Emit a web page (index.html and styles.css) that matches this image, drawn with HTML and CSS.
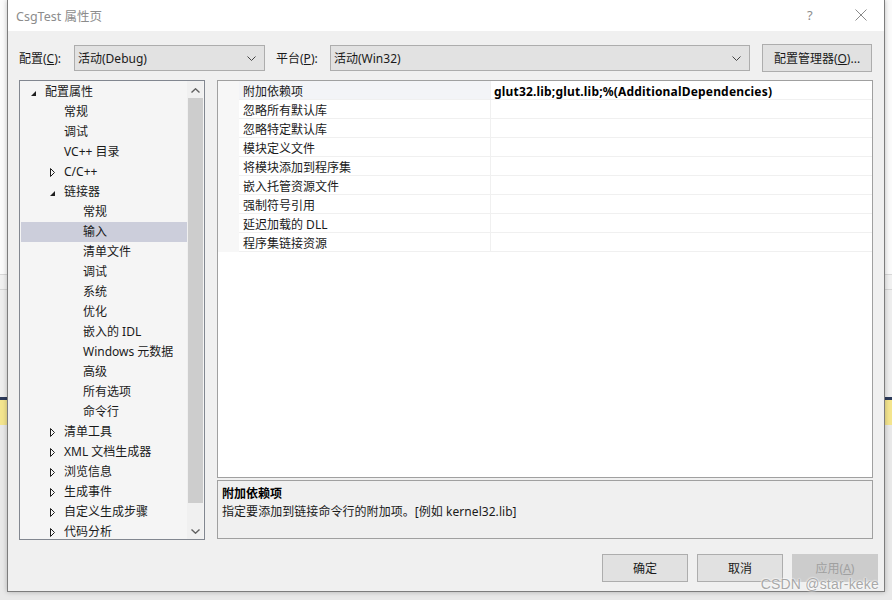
FILE: index.html
```html
<!DOCTYPE html>
<html lang="zh-CN">
<head>
<meta charset="utf-8">
<title>CsgTest 属性页</title>
<link rel="stylesheet" href="styles.css">
</head>
<body>
<div class="dialog">
  <div class="titlebar">
    <span class="title">CsgTest 属性页</span>
    <span class="help">?</span>
    <span class="close"><svg width="12" height="12" viewBox="0 0 12 12"><path d="M0.5 0.5 L11.5 11.5 M11.5 0.5 L0.5 11.5" stroke="#8a8a8a" stroke-width="1" fill="none"/></svg></span>
  </div>
  <div class="content">
    <div class="config-row">
      <span class="label l1">配置(<u>C</u>):</span>
      <div class="combo c1"><span>活动(Debug)</span><svg class="chev" width="9" height="5" viewBox="0 0 9 5"><path d="M0.5 0.5 L4.5 4.5 L8.5 0.5" stroke="#444" fill="none"/></svg></div>
      <span class="label l2">平台(<u>P</u>):</span>
      <div class="combo c2"><span>活动(Win32)</span><svg class="chev" width="9" height="5" viewBox="0 0 9 5"><path d="M0.5 0.5 L4.5 4.5 L8.5 0.5" stroke="#444" fill="none"/></svg></div>
      <button class="btn mgr">配置管理器(<u>O</u>)...</button>
    </div>
    <div class="main">
      <div class="tree">
        <div class="tree-list">
          <div class="node lv0"><span class="arr"><svg width="19" height="20"><path d="M10 9 L10 14 L5 14 Z" fill="#1e1e1e"/></svg></span>配置属性</div>
          <div class="node lv1"><span class="arr"></span>常规</div>
          <div class="node lv1"><span class="arr"></span>调试</div>
          <div class="node lv1"><span class="arr"></span>VC++ 目录</div>
          <div class="node lv1"><span class="arr"><svg width="19" height="20"><path d="M5.5 6.5 L9.5 10.5 L5.5 14.5 Z" fill="none" stroke="#1e1e1e"/></svg></span>C/C++</div>
          <div class="node lv1"><span class="arr"><svg width="19" height="20"><path d="M10 9 L10 14 L5 14 Z" fill="#1e1e1e"/></svg></span>链接器</div>
          <div class="node lv2"><span class="arr"></span>常规</div>
          <div class="node lv2 sel"><span class="arr"></span>输入</div>
          <div class="node lv2"><span class="arr"></span>清单文件</div>
          <div class="node lv2"><span class="arr"></span>调试</div>
          <div class="node lv2"><span class="arr"></span>系统</div>
          <div class="node lv2"><span class="arr"></span>优化</div>
          <div class="node lv2"><span class="arr"></span>嵌入的 IDL</div>
          <div class="node lv2"><span class="arr"></span>Windows 元数据</div>
          <div class="node lv2"><span class="arr"></span>高级</div>
          <div class="node lv2"><span class="arr"></span>所有选项</div>
          <div class="node lv2"><span class="arr"></span>命令行</div>
          <div class="node lv1"><span class="arr"><svg width="19" height="20"><path d="M5.5 6.5 L9.5 10.5 L5.5 14.5 Z" fill="none" stroke="#1e1e1e"/></svg></span>清单工具</div>
          <div class="node lv1"><span class="arr"><svg width="19" height="20"><path d="M5.5 6.5 L9.5 10.5 L5.5 14.5 Z" fill="none" stroke="#1e1e1e"/></svg></span>XML 文档生成器</div>
          <div class="node lv1"><span class="arr"><svg width="19" height="20"><path d="M5.5 6.5 L9.5 10.5 L5.5 14.5 Z" fill="none" stroke="#1e1e1e"/></svg></span>浏览信息</div>
          <div class="node lv1"><span class="arr"><svg width="19" height="20"><path d="M5.5 6.5 L9.5 10.5 L5.5 14.5 Z" fill="none" stroke="#1e1e1e"/></svg></span>生成事件</div>
          <div class="node lv1"><span class="arr"><svg width="19" height="20"><path d="M5.5 6.5 L9.5 10.5 L5.5 14.5 Z" fill="none" stroke="#1e1e1e"/></svg></span>自定义生成步骤</div>
          <div class="node lv1"><span class="arr"><svg width="19" height="20"><path d="M5.5 6.5 L9.5 10.5 L5.5 14.5 Z" fill="none" stroke="#1e1e1e"/></svg></span>代码分析</div>
        </div>
        <div class="vscroll">
          <div class="sarrow"><svg width="9" height="5" viewBox="0 0 9 5"><path d="M0.5 4.5 L4.5 0.8 L8.5 4.5" stroke="#606060" stroke-width="1.4" fill="none"/></svg></div>
          <div class="thumb"></div>
          <div class="sarrow"><svg width="9" height="5" viewBox="0 0 9 5"><path d="M0.5 0.5 L4.5 4.2 L8.5 0.5" stroke="#606060" stroke-width="1.4" fill="none"/></svg></div>
        </div>
      </div>
      <div class="right">
        <div class="grid">
          <div class="prow first"><span class="gut"></span><span class="pname">附加依赖项</span><span class="pval">glut32.lib;glut.lib;%(AdditionalDependencies)</span></div>
          <div class="prow"><span class="gut"></span><span class="pname">忽略所有默认库</span><span class="pval"></span></div>
          <div class="prow"><span class="gut"></span><span class="pname">忽略特定默认库</span><span class="pval"></span></div>
          <div class="prow"><span class="gut"></span><span class="pname">模块定义文件</span><span class="pval"></span></div>
          <div class="prow"><span class="gut"></span><span class="pname">将模块添加到程序集</span><span class="pval"></span></div>
          <div class="prow"><span class="gut"></span><span class="pname">嵌入托管资源文件</span><span class="pval"></span></div>
          <div class="prow"><span class="gut"></span><span class="pname">强制符号引用</span><span class="pval"></span></div>
          <div class="prow"><span class="gut"></span><span class="pname">延迟加载的 DLL</span><span class="pval"></span></div>
          <div class="prow"><span class="gut"></span><span class="pname">程序集链接资源</span><span class="pval"></span></div>
        </div>
        <div class="desc">
          <div class="desc-title">附加依赖项</div>
          <div class="desc-text">指定要添加到链接命令行的附加项。[例如 kernel32.lib]</div>
        </div>
      </div>
    </div>
    <div class="buttons">
      <button class="btn act">确定</button>
      <button class="btn act">取消</button>
      <button class="btn disabled">应用(<u>A</u>)</button>
    </div>
  </div>
  <div class="csdn">CSDN @star-keke</div>
</div>
</body>
</html>
```

FILE: styles.css
```css
* { box-sizing: border-box; }
html, body { margin: 0; padding: 0; }
body {
  width: 892px;
  height: 600px;
  overflow: hidden;
  padding-left: 7px;
  font-family: "Noto Sans", "Noto Sans CJK SC", sans-serif;
  font-size: 12px;
  color: #1a1a1a;
  background:
    linear-gradient(to bottom,
      #fbfbfb 0, #fbfbfb 274px,
      #d8d8d8 274px, #d8d8d8 275px,
      #f1f1f1 275px, #f1f1f1 289px,
      #d6d6d6 289px, #d6d6d6 290px,
      #eeeeee 290px, #eeeeee 397px,
      #2d3b5a 397px, #2d3b5a 400px,
      #f4e58e 400px, #f4e58e 425px,
      #e9e9e9 425px, #e9e9e9 600px);
}
.dialog {
  position: relative;
  width: 878px;
  height: 592px;
  background: #f0f0f0;
  border: 1px solid #7d7d7d;
  border-top: none;
  box-shadow: 0 0 5px rgba(0,0,0,0.25);
  display: flex;
  flex-direction: column;
}
.titlebar {
  height: 31px;
  background: #ffffff;
  display: flex;
  align-items: center;
  padding-left: 8px;
  padding-bottom: 1px;
  flex: none;
}
.title {
  color: #8c8c8c;
  font-size: 12.5px;
  flex: 1;
}
.help {
  color: #8c8c8c;
  font-size: 13px;
  width: 12px;
  margin-right: 36px;
}
.close {
  display: flex;
  margin-right: 17px;
}
.content {
  flex: 1;
  display: flex;
  flex-direction: column;
  padding: 13px 11px 10px 11px;
}
.config-row {
  display: flex;
  align-items: center;
  height: 28px;
}
.label { display: inline-block; color: #1a1a1a; }
.l1 { width: 55px; }
.l2 { width: 54px; margin-left: 11px; }
.combo {
  height: 26px;
  background: #e2e2e2;
  border: 1px solid #adadad;
  display: flex;
  align-items: center;
  justify-content: space-between;
  padding: 0 8px 0 3px;
}
.c1 { width: 191px; }
.c2 { width: 420px; }
.chev { display: block; }
.btn {
  font-family: inherit;
  font-size: 12px;
  color: #1a1a1a;
  background: #e1e1e1;
  border: 1px solid #adadad;
  height: 28px;
  padding: 0;
  margin: 0;
}
.mgr { width: 110px; margin-left: 12px; }
.main {
  display: flex;
  gap: 12px;
  margin-top: 8px;
  height: 460px;
}
.tree {
  width: 186px;
  height: 460px;
  border: 1px solid #828790;
  background: #f5f5f5;
  display: flex;
  overflow: hidden;
}
.tree-list {
  flex: 1;
  padding-left: 1px;
  padding-top: 1px;
  overflow: hidden;
}
.node {
  height: 20px;
  line-height: 20px;
  display: flex;
  white-space: nowrap;
}
.node.sel { background: #cccedb; }
.arr { width: 19px; flex: none; display: flex; }
.lv0 { padding-left: 5px; }
.lv1 { padding-left: 24px; }
.lv2 { padding-left: 43px; }
.vscroll {
  width: 16px;
  flex: none;
  background: #f0f0f0;
  display: flex;
  flex-direction: column;
  align-items: center;
  margin-right: 1px;
}
.sarrow {
  height: 17px;
  display: flex;
  align-items: center;
  justify-content: center;
  padding-top: 1px;
}
.thumb {
  width: 15px;
  flex: 1;
  background: #cdcdcd;
  margin-bottom: 19px;
}
.right {
  width: 656px;
  display: flex;
  flex-direction: column;
  gap: 2px;
}
.grid {
  height: 398px;
  background: #ffffff;
  border: 1px solid #a0a0a0;
  overflow: hidden;
}
.prow {
  display: flex;
  height: 19px;
  line-height: 17px;
}
.gut {
  width: 21px;
  flex: none;
  background: #f7f7f7;
}
.pname {
  width: 252px;
  flex: none;
  padding: 2px 0 0 4px;
  border-bottom: 1px solid #f0f0f0;
  border-right: 1px solid #f0f0f0;
}
.pval {
  flex: 1;
  padding: 2px 0 0 3px;
  font-weight: bold;
  color: #000;
  letter-spacing: 0.18px;
  border-bottom: 1px solid #f0f0f0;
  white-space: nowrap;
}
.prow.first .pname { background: #f3f4f7; }
.desc {
  height: 59px;
  border: 1px solid #a0a0a0;
  background: #f0f0f0;
  padding: 4px 4px 0 4px;
  line-height: 18px;
}
.desc-title { font-weight: bold; color: #000; }
.desc-text { letter-spacing: 0.05px; }
.buttons {
  display: flex;
  justify-content: flex-end;
  gap: 9px;
  margin-top: 14px;
  margin-right: -5px;
}
.buttons .btn { width: 86px; }
.btn.disabled {
  background: #cccccc;
  border-color: #cccccc;
  color: #a0a0a0;
}
.csdn {
  position: absolute;
  right: 5px;
  bottom: -1px;
  font-family: "Liberation Sans", "Noto Sans", sans-serif;
  font-size: 14px;
  color: #a8a8a8;
  text-shadow: 0 0 2px #fff, 0 0 2px #fff;
  letter-spacing: 0.2px;
}
```
